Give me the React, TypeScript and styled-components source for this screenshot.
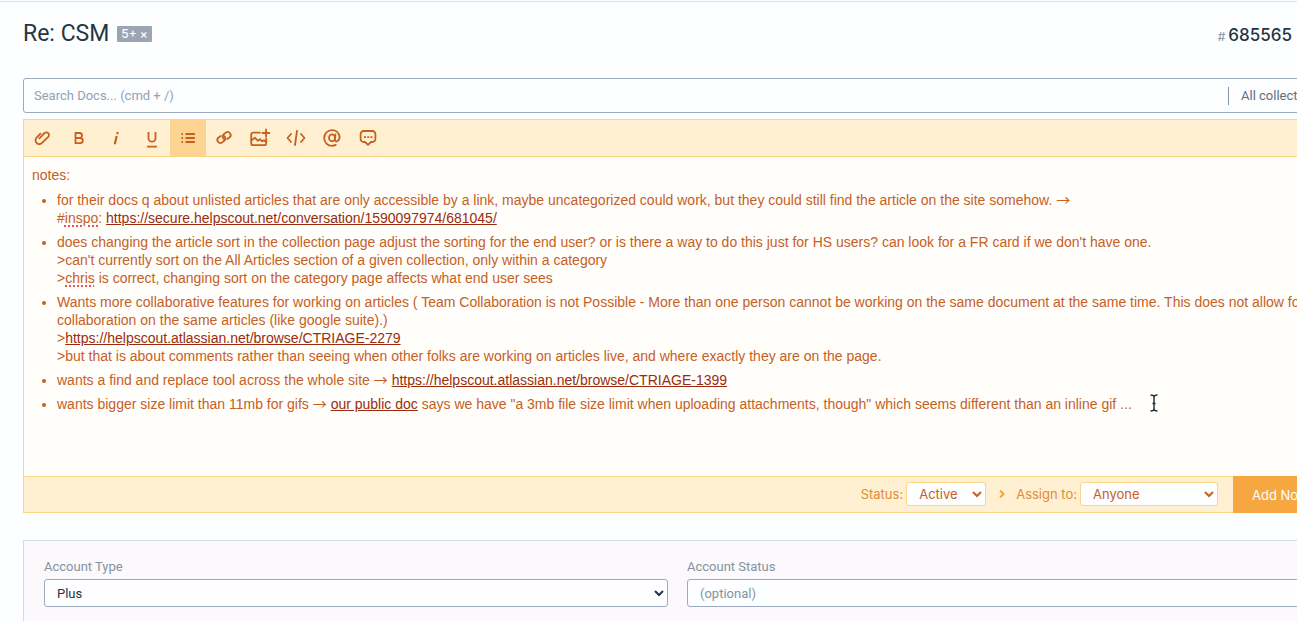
import React from "react";
import styled, { createGlobalStyle, css } from "styled-components";

const ui = `Inter, "Liberation Sans", sans-serif`;
const compact = `Roboto, "Liberation Sans", sans-serif`;
const prose = `"Liberation Sans", Arial, sans-serif`;

const GlobalStyle = createGlobalStyle`
  *, *::before, *::after { box-sizing: border-box; }
  body {
    margin: 0;
    background: #fdfeff;
    color: #253642;
    font-family: ${ui};
    font-size: 13px;
    overflow: hidden;
  }
  button, input, select { font: inherit; color: inherit; }
`;

const Page = styled.main`
  margin-top: 1px;
  border-top: 1px solid #dfe0e4;
`;

const Content = styled.div`
  margin-left: 23px;
  margin-right: -35px;
`;

const Header = styled.header`
  display: flex;
  align-items: center;
  justify-content: space-between;
  height: 76px;
  padding: 0 40px 12px 0;
`;

const TitleGroup = styled.div`
  display: flex;
  align-items: center;
  gap: 8px;
`;

const Title = styled.h1`
  margin: 0;
  font: 400 23px/32px ${compact};
`;

const TagButton = styled.button`
  display: flex;
  align-items: center;
  gap: 3px;
  height: 16px;
  padding: 0 4px;
  border: 0;
  border-radius: 1px;
  background: #9ba6b2;
  color: #fff;
  font-size: 12px;
  font-weight: 500;
  line-height: 16px;
`;

const TicketNumber = styled.div`
  display: flex;
  align-items: baseline;
  gap: 3px;
  padding-top: 4px;
  font-size: 17px;
  font-weight: 500;
  line-height: 24px;
  span { color: #8f9ba7; font-size: 12px; }
`;

const SearchBar = styled.form`
  display: flex;
  align-items: center;
  height: 35px;
  border: 1px solid #9daabd;
  border-radius: 3px;
  background: #fdfeff;
  font-family: ${compact};
`;

const SearchInput = styled.input`
  flex: 1;
  min-width: 0;
  padding: 0 10px;
  border: 0;
  outline: 0;
  background: transparent;
  &::placeholder { color: #93a1af; opacity: 1; }
`;

const CollectionSelect = styled.select`
  width: 103px;
  height: 18px;
  padding: 0 0 0 12px;
  border: 0;
  border-left: 1px solid #8595a8;
  background: transparent;
  color: #5d6f7e;
  line-height: 18px;
  appearance: none;
`;

const Composer = styled.section`
  margin-top: 6px;
  border: 1px solid #fcd585;
  background: #fffefb;
  color: #c6601f;
`;

const Toolbar = styled.div`
  display: flex;
  height: 37px;
  border-bottom: 1px solid #fcd585;
  background: #fef0d1;
`;

const ToolButton = styled.button<{ $active?: boolean; $wide?: boolean }>`
  display: flex;
  align-items: center;
  justify-content: center;
  width: ${(p) => (p.$wide ? 37 : 36)}px;
  padding: 0;
  border: 0;
  background: ${(p) => (p.$active ? "#fcd391" : "transparent")};
`;

const Icon = styled.svg`
  width: 20px;
  height: 20px;
  fill: none;
  stroke: currentColor;
  stroke-width: 1.8;
  stroke-linecap: round;
  stroke-linejoin: round;
`;

const Note = styled.div`
  position: relative;
  min-height: 319px;
  padding: 9px 8px;
  font: 14px/18px ${prose};
  outline: 0;
  p { margin: 0; }
  ul { margin: 7px 0 0; padding-left: 25px; }
  li + li { margin-top: 6px; }
`;

const NoteLink = styled.a`
  color: #9a2c0c;
  text-decoration: underline;
`;

const Misspelled = styled.span`
  text-decoration: underline dotted #f0504a 2px;
  text-underline-offset: 2px;
`;

const Arrow = styled.span`
  font-family: "Noto Sans CJK JP", sans-serif;
  line-height: 1;
`;

const TextCursor = styled.svg`
  position: absolute;
  left: 1125px;
  top: 237px;
  width: 10px;
  height: 18px;
  fill: none;
  stroke: #1f2a33;
  stroke-width: 1.4;
`;

const ActionBar = styled.div`
  display: flex;
  align-items: center;
  justify-content: flex-end;
  height: 36px;
  padding-bottom: 1px;
  border-top: 1px solid #fcd585;
  background: #fef0d1;
  color: #e38c39;
`;

const Label = styled.label`
  margin-right: 3px;
`;

const SelectBox = styled.div<{ $width?: number; $tone: "warm" | "plain" }>`
  display: grid;
  align-items: center;
  ${(p) => p.$width && css`width: ${p.$width}px;`}
  height: ${(p) => (p.$tone === "warm" ? 24 : 28)}px;
  border: 1px solid ${(p) => (p.$tone === "warm" ? "#fcd585" : "#9daabd")};
  border-radius: 3px;
  background: #fdfeff;
  color: ${(p) => (p.$tone === "warm" ? "#c6601f" : "#253642")};
  > * { grid-area: 1 / 1; }
`;

const Select = styled.select<{ $muted?: boolean }>`
  width: 100%;
  height: 100%;
  padding: 0 24px 0 12px;
  border: 0;
  background: transparent;
  ${(p) => p.$muted && css`color: #84939f;`}
  appearance: none;
`;

const Chevron = styled.svg`
  justify-self: end;
  width: 10px;
  height: 8px;
  margin-right: 3px;
  fill: none;
  stroke: currentColor;
  stroke-width: 2;
  pointer-events: none;
`;

const Separator = styled.svg`
  width: 6px;
  height: 8px;
  margin: 0 11px 0 13px;
  fill: none;
  stroke: #f3a53f;
  stroke-width: 2;
`;

const SubmitButton = styled.button`
  align-self: stretch;
  width: 99px;
  margin: -1px -1px -2px 15px;
  padding: 0 0 0 19px;
  border: 0;
  background: #f6a740;
  color: #fff;
  text-align: left;
`;

const Account = styled.section`
  display: grid;
  grid-template-columns: 1fr 1fr;
  gap: 19px;
  margin-top: 27px;
  padding: 17px 20px;
  border: 1px solid #d5dae0;
  background: #fbf9fb;
`;

const Field = styled.div`
  display: flex;
  flex-direction: column;
  gap: 4px;
  font-family: ${compact};
  label { color: #84939f; line-height: 17px; }
`;

function Dropdown(props: {
  id: string;
  value: string;
  tone: "warm" | "plain";
  width?: number;
  muted?: boolean;
}) {
  return (
    <SelectBox $tone={props.tone} $width={props.width}>
      <Select id={props.id} $muted={props.muted}>
        <option>{props.value}</option>
      </Select>
      <Chevron viewBox="0 0 10 8" aria-hidden="true">
        <path d="M1 2l4 4 4-4" />
      </Chevron>
    </SelectBox>
  );
}

const tools: { name: string; wide?: boolean; active?: boolean; art: React.ReactNode }[] = [
  {
    name: "Attach",
    art: <path d="M8.4 5.6 4.6 9.6C3 11.3 3.2 13.8 4.7 15.1s3.8 1.200 5.300-.300L15.800 9.400c1.400-1.300 1.500-3.100.400-4.200s-2.900-1-4.200.300L7.400 10.300" />,
  },
  {
    name: "Bold",
    wide: true,
    art: <path d="M6.500 5h4a2.500 2.500 0 0 1 0 5h-4zM6.500 10h4.700a2.600 2.600 0 0 1 0 5.200H6.500z" strokeLinejoin="miter" />,
  },
  {
    name: "Italic",
    wide: true,
    art: <path d="M10.400 9 9 15.200M11.500 5v.2" strokeWidth="2.200" strokeLinecap="square" />,
  },
  {
    name: "Underline",
    art: <path d="M6.500 5v5.200a3.500 3.500 0 0 0 7 0V5M6 18.600h8" strokeLinecap="square" />,
  },
  {
    name: "List",
    active: true,
    art: (
      <>
        <path d="M8.200 6h8M8.200 10h8M8.200 14h8" />
        <path d="M3.500 6h1.500M3.500 10h1.500M3.500 14h1.500" strokeLinecap="butt" />
      </>
    ),
  },
  {
    name: "Link",
    art: (
      <>
        <path d="M6.800 8 4.600 9.600a3 3 0 0 0 3.600 4.800l2-1.600a3 3 0 0 0-.5-5" />
        <path d="M13.200 11l2.200-1.600a3 3 0 0 0-3.600-4.800l-2 1.600a3 3 0 0 0 .5 5" />
      </>
    ),
  },
  {
    name: "Image",
    art: (
      <>
        <path d="M10 4.600H3.200a2 2 0 0 0-2 2v8.600a2 2 0 0 0 2 2h11a2 2 0 0 0 2-2V10.500" />
        <path d="M1.500 12.200 5 9.800l3 3 2-1.600 2.200 2.200 1.600-1.200 2.200 1.600" />
        <path d="M16 1.500v7M12.500 5h7" />
      </>
    ),
  },
  { name: "Code", art: <path d="M5 6 1.500 10 5 14M15 6l3.500 4-3.500 4M11 3 9 17" /> },
  {
    name: "Mention",
    art: (
      <>
        <ellipse cx="10" cy="9.800" rx="3" ry="3.500" />
        <path d="M13.500 6.300 12.800 11c-.3 2.300 1.200 2.700 2.500 2.100 1.600-.8 2.400-2.500 2.200-4.400C17.100 4.700 14 2.200 10 2.200a7.800 7.800 0 0 0 0 15.600c1.400 0 2.700-.3 3.800-.9" />
      </>
    ),
  },
  {
    name: "Saved reply",
    art: (
      <>
        <path d="M5.600 3h8.800a3 3 0 0 1 3 3v5a3 3 0 0 1-3 3H13l-3 2.800L7 14H5.600a3 3 0 0 1-3-3V6a3 3 0 0 1 3-3z" />
        <path d="M6 9.200h2M9.200 9.200h2M12.400 9.200h2" strokeLinecap="butt" />
      </>
    ),
  },
];

export default function App() {
  return (
    <Page>
      <GlobalStyle />
      <Content>
        <Header>
          <TitleGroup>
            <Title>Re: CSM</Title>
            <TagButton type="button">
              5+ <span>×</span>
            </TagButton>
          </TitleGroup>
          <TicketNumber>
            <span>#</span>685565
          </TicketNumber>
        </Header>

        <SearchBar>
          <SearchInput type="text" aria-label="Search Docs" placeholder="Search Docs... (cmd + /)" />
          <CollectionSelect aria-label="Collection">
            <option>All collections</option>
          </CollectionSelect>
        </SearchBar>

        <Composer>
          <Toolbar>
            {tools.map((t) => (
              <ToolButton key={t.name} type="button" aria-label={t.name} $active={t.active} $wide={t.wide}>
                <Icon viewBox="0 0 20 20" aria-hidden="true">
                  {t.art}
                </Icon>
              </ToolButton>
            ))}
          </Toolbar>

          <Note>
            <p>notes:</p>
            <ul>
              <li>
                for their docs q about unlisted articles that are only accessible by a link, maybe uncategorized
                could work, but they could still find the article on the site somehow. <Arrow>→</Arrow>
                <br />#<Misspelled>inspo</Misspelled>:{" "}
                <NoteLink href="#inspo">https://secure.helpscout.net/conversation/1590097974/681045/</NoteLink>
              </li>
              <li>
                does changing the article sort in the collection page adjust the sorting for the end user? or is
                there a way to do this just for HS users? can look for a FR card if we don't have one.
                <br />
                &gt;can't currently sort on the All Articles section of a given collection, only within a category
                <br />
                &gt;<Misspelled>chris</Misspelled> is correct, changing sort on the category page affects what end
                user sees
              </li>
              <li>
                Wants more collaborative features for working on articles ( Team Collaboration is not Possible -
                More than one person cannot be working on the same document at the same time. This does not allow
                for collaboration on the same articles (like google suite).)
                <br />
                &gt;<NoteLink href="#2279">https://helpscout.atlassian.net/browse/CTRIAGE-2279</NoteLink>
                <br />
                &gt;but that is about comments rather than seeing when other folks are working on articles live,
                and where exactly they are on the page.
              </li>
              <li>
                wants a find and replace tool across the whole site <Arrow>→</Arrow>{" "}
                <NoteLink href="#1399">https://helpscout.atlassian.net/browse/CTRIAGE-1399</NoteLink>
              </li>
              <li>
                wants bigger size limit than 11mb for gifs <Arrow>→</Arrow>{" "}
                <NoteLink href="#doc">our public doc</NoteLink> says we have "a 3mb file size limit when uploading
                attachments, though" which seems different than an inline gif ...
              </li>
            </ul>
            <TextCursor viewBox="0 0 10 18" aria-hidden="true">
              <path d="M1.500 1C3.500 1 5 1.600 5 3v12c0 1.400-1.500 2-3.500 2M8.500 1C6.500 1 5 1.600 5 3M5 15c0 1.400 1.500 2 3.500 2M3.500 9.500h3" />
            </TextCursor>
          </Note>

          <ActionBar>
            <Label htmlFor="status">Status:</Label>
            <Dropdown id="status" value="Active" tone="warm" width={80} />
            <Separator viewBox="0 0 6 8" aria-hidden="true">
              <path d="M1 .5 4.500 4 1 7.500" />
            </Separator>
            <Label htmlFor="assignee">Assign to:</Label>
            <Dropdown id="assignee" value="Anyone" tone="warm" width={138} />
            <SubmitButton type="button">Add Note</SubmitButton>
          </ActionBar>
        </Composer>

        <Account>
          <Field>
            <label htmlFor="account-type">Account Type</label>
            <Dropdown id="account-type" value="Plus" tone="plain" />
          </Field>
          <Field>
            <label htmlFor="account-status">Account Status</label>
            <Dropdown id="account-status" value="(optional)" tone="plain" muted />
          </Field>
        </Account>
      </Content>
    </Page>
  );
}
